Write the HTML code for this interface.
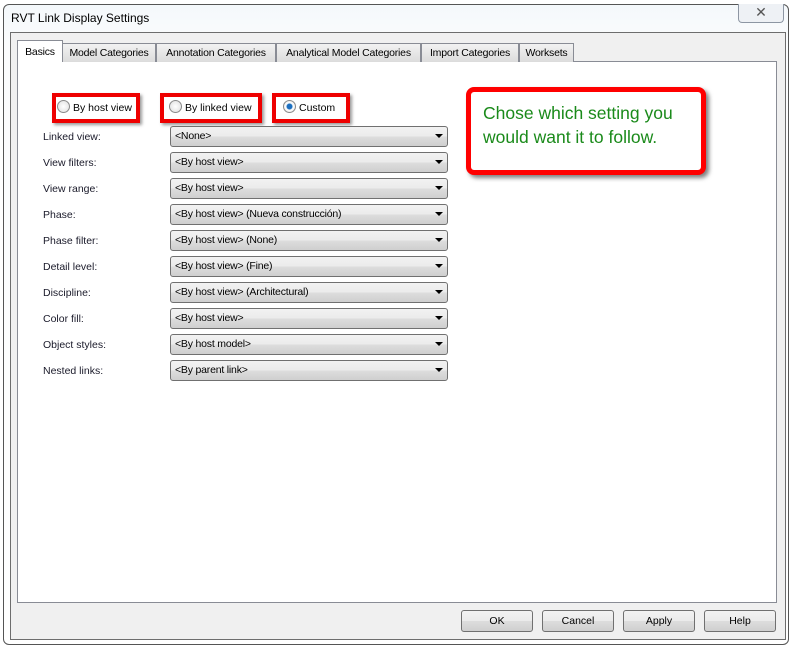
<!DOCTYPE html>
<html><head><style>
body{margin:0;width:795px;height:648px;background:#fff;position:relative;overflow:hidden;font-family:"Liberation Sans",sans-serif;font-size:11px;color:#000}
.abs{position:absolute}
.win{left:3px;top:4px;width:786px;height:641px;border:1px solid #555;border-radius:6px;background:linear-gradient(#f4f8fb,#fbfcfd 40px,#fff);box-sizing:border-box}
.client{left:10px;top:32px;width:776px;height:608px;border:1px solid #6d6d6d;background:#f0f0f0;box-sizing:border-box}
.panel{left:17px;top:61px;width:760px;height:542px;border:1px solid #898c95;background:#fff;box-sizing:border-box}
.tab{top:43px;height:19px;border:1px solid #898c95;border-bottom:none;background:linear-gradient(#f2f2f2,#dcdcdc);box-sizing:border-box;line-height:18px;text-align:center;font-size:10.5px;letter-spacing:-0.2px}
.lbl{left:43px;font-size:10.5px;color:#1a1a2a}
.cb{left:170px;width:278px;height:21px;border:1px solid #707070;border-radius:3px;background:linear-gradient(#f2f2f2 0,#ebebeb 50%,#dddddd 51%,#cfcfcf);box-sizing:border-box;line-height:19px;padding-left:4px;font-size:10.5px;letter-spacing:-0.2px}
.cb:after{content:"";position:absolute;right:4px;top:7px;border-left:4px solid transparent;border-right:4px solid transparent;border-top:4px solid #000}
.red{border:4px solid #e00;box-sizing:border-box;box-shadow:2px 2px 3px rgba(0,0,0,.4)}
.rad{width:11px;height:11px;border-radius:50%;border:1px solid #8a8a8a;background:radial-gradient(#fff,#ddd);display:inline-block;vertical-align:-2px;margin-right:3px}
.btn{top:610px;width:72px;height:22px;border:1px solid #707070;border-radius:3px;background:linear-gradient(#f2f2f2 0,#ebebeb 50%,#dddddd 51%,#cfcfcf);box-sizing:border-box;text-align:center;line-height:20px;font-size:10.5px}
</style></head><body>
<div class="abs win"></div>
<div class="abs" style="left:11px;top:11px;font-size:12px">RVT Link Display Settings</div>
<div class="abs" style="left:738px;top:4px;width:46px;height:19px;border:1px solid #8d96a3;border-top:none;border-radius:0 0 4px 4px;background:#eef1f5;box-sizing:border-box;text-align:center;color:#555;font-size:14px;line-height:17px">✕</div>
<div class="abs client"></div>
<div class="abs panel"></div>
<div class="abs tab" style="left:62px;width:94px">Model Categories</div>
<div class="abs tab" style="left:156px;width:120px">Annotation Categories</div>
<div class="abs tab" style="left:276px;width:145px">Analytical Model Categories</div>
<div class="abs tab" style="left:421px;width:98px">Import Categories</div>
<div class="abs tab" style="left:519px;width:55px">Worksets</div>
<div class="abs tab" style="left:17px;top:40px;width:46px;height:22px;background:#fff;line-height:22px">Basics</div>

<div class="abs red" style="left:52px;top:93px;width:88px;height:30px"></div>
<div class="abs red" style="left:160px;top:93px;width:102px;height:30px"></div>
<div class="abs red" style="left:272px;top:93px;width:78px;height:30px"></div>
<div class="abs" style="left:57px;top:100px;font-size:10.5px"><span class="rad"></span>By host view</div>
<div class="abs" style="left:169px;top:100px;font-size:10.5px"><span class="rad"></span>By linked view</div>
<div class="abs" style="left:283px;top:100px;font-size:10.5px"><span class="rad" style="background:radial-gradient(#1c6fc0 0,#1c6fc0 2.5px,#fff 3.5px,#ddd)"></span>Custom</div>

<div class="abs" style="left:466px;top:87px;width:240px;height:88px;border:5px solid #f00;border-radius:8px;background:#fff;box-sizing:border-box;box-shadow:3px 3px 4px rgba(0,0,0,.5);padding:9px 0 0 12px;color:#1a8a1a;font-size:17.5px;line-height:24px">Chose which setting you<br>would want it to follow.</div>

<div class="abs lbl" style="top:131px">Linked view:</div><div class="abs cb" style="top:126px">&lt;None&gt;</div>
<div class="abs lbl" style="top:157px">View filters:</div><div class="abs cb" style="top:152px">&lt;By host view&gt;</div>
<div class="abs lbl" style="top:183px">View range:</div><div class="abs cb" style="top:178px">&lt;By host view&gt;</div>
<div class="abs lbl" style="top:209px">Phase:</div><div class="abs cb" style="top:204px">&lt;By host view&gt; (Nueva construcción)</div>
<div class="abs lbl" style="top:235px">Phase filter:</div><div class="abs cb" style="top:230px">&lt;By host view&gt; (None)</div>
<div class="abs lbl" style="top:261px">Detail level:</div><div class="abs cb" style="top:256px">&lt;By host view&gt; (Fine)</div>
<div class="abs lbl" style="top:287px">Discipline:</div><div class="abs cb" style="top:282px">&lt;By host view&gt; (Architectural)</div>
<div class="abs lbl" style="top:313px">Color fill:</div><div class="abs cb" style="top:308px">&lt;By host view&gt;</div>
<div class="abs lbl" style="top:339px">Object styles:</div><div class="abs cb" style="top:334px">&lt;By host model&gt;</div>
<div class="abs lbl" style="top:365px">Nested links:</div><div class="abs cb" style="top:360px">&lt;By parent link&gt;</div>

<div class="abs btn" style="left:461px">OK</div>
<div class="abs btn" style="left:542px">Cancel</div>
<div class="abs btn" style="left:623px">Apply</div>
<div class="abs btn" style="left:704px">Help</div>
</body></html>
